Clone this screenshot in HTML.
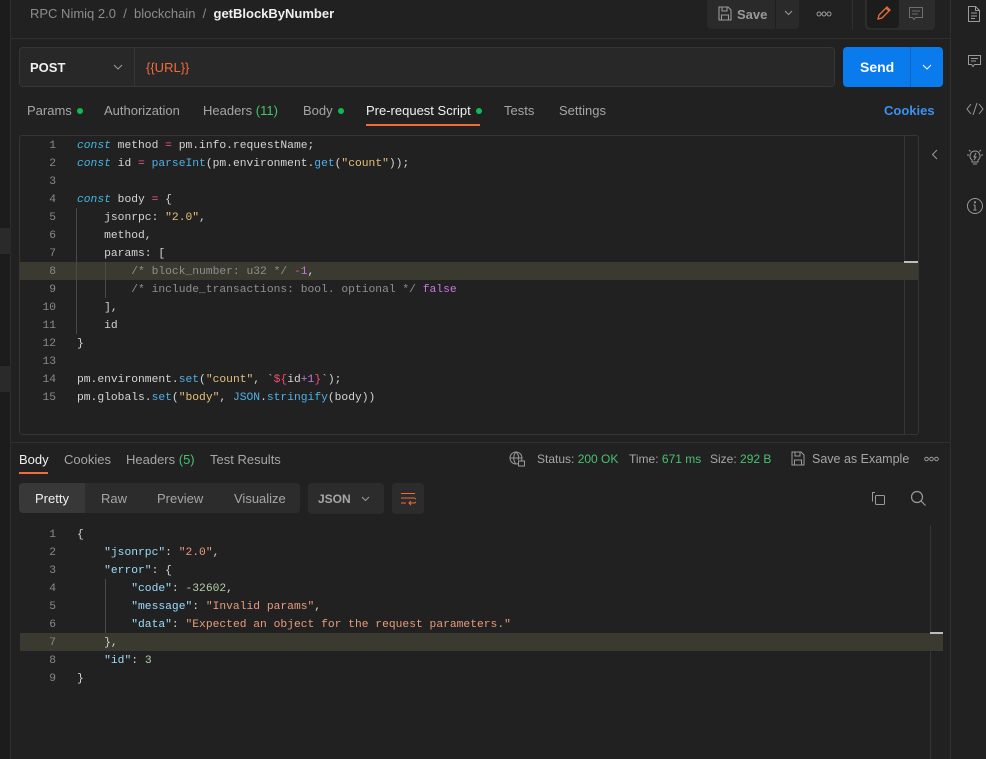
<!DOCTYPE html>
<html><head><meta charset="utf-8"><style>
*{box-sizing:border-box;margin:0;padding:0}
body{width:986px;height:759px;background:#212121;overflow:hidden;position:relative;font-family:"Liberation Sans",sans-serif;color:#a6a6a6;font-size:13px}
.a{position:absolute}
.mono{font-family:"Liberation Mono",monospace;font-size:11.3px;white-space:pre;color:#d4d4d4}
.ln{position:absolute;width:36px;text-align:right;color:#8a8a8a;font-family:"Liberation Mono",monospace;font-size:11.3px}
.k{color:#43b6e0;font-style:italic}.f{color:#4fb0e6}.s{color:#e5c07b}.c{color:#8f8f8f}.n{color:#c678dd}.r{color:#f0506e}.o{color:#ee5a8a}
.js{color:#9cdcfe}.jv{color:#e89c7c}.jn{color:#b5cea8}
.dot{display:inline-block;width:6px;height:6px;border-radius:50%;background:#0cbb52;margin-left:5px;vertical-align:1px}
.g{color:#49c171}
</style></head><body>
<div class="a" style="left:0;top:0;width:11px;height:759px;background:#1c1c1c;border-right:1px solid #2d2d2d"></div>
<div class="a" style="left:0;top:228px;width:11px;height:26px;background:#2a2a2a"></div>
<div class="a" style="left:0;top:366px;width:11px;height:26px;background:#2a2a2a"></div>
<div class="a" style="left:950px;top:0;width:36px;height:759px;border-left:1px solid #2f2f2f;background:#212121"></div>
<div class="a" style="left:11px;top:38px;width:939px;height:1px;background:#2f2f2f"></div>
<div class="a" style="left:30px;top:6px;font-size:13px;color:#8c8c8c">RPC Nimiq 2.0 &nbsp;/&nbsp; blockchain &nbsp;/&nbsp; <b style="color:#f0f0f0">getBlockByNumber</b></div>
<!-- save -->
<div class="a" style="left:707px;top:0;width:92px;height:29px;background:#2a2a2a;border-radius:0 0 4px 4px"></div>
<div class="a" style="left:775px;top:0;width:1px;height:29px;background:#1f1f1f"></div>
<svg class="a" style="left:718px;top:6px" width="14" height="15" viewBox="0 0 14 15" fill="none" stroke="#9a9a9a" stroke-width="1.1"><path d="M1 1h9l3 3v10H1z M4 1v4h5V1 M3.5 14V9h7v5"/></svg>
<div class="a" style="left:737px;top:7px;font-weight:bold;color:#9a9a9a">Save</div>
<svg class="a" style="left:784px;top:10px" width="9" height="6"><path d="M1 1l3.5 3.5L8 1" stroke="#9a9a9a" fill="none"/></svg>
<svg class="a" style="left:816px;top:11px" width="16" height="6" fill="none" stroke="#9a9a9a"><circle cx="3" cy="3" r="2"/><circle cx="8" cy="3" r="2"/><circle cx="13" cy="3" r="2"/></svg>
<div class="a" style="left:852px;top:0;width:1px;height:30px;background:#2f2f2f"></div>
<div class="a" style="left:865px;top:0;width:70px;height:30px;background:#2c2c2c;border-radius:0 0 4px 4px"></div>
<div class="a" style="left:867px;top:0;width:32px;height:28px;background:#1c1c1c;border-radius:0 0 4px 4px"></div>
<svg class="a" style="left:875px;top:5px" width="16" height="17"><path d="M3 14l1-4 8-8 3 3-8 8z M11 3l3 3" stroke="#e4703c" fill="none" stroke-width="1.3"/></svg>
<svg class="a" style="left:908px;top:6px" width="16" height="16" fill="none" stroke="#6e6e6e"><path d="M1.5 1.5h13v10h-7l-1.5 2-1.5-2h-3z M4 5h8 M4 8h6"/></svg>
<!-- right sidebar icons -->
<svg class="a" style="left:967px;top:5px" width="14" height="18" fill="none" stroke="#9a9a9a"><path d="M1.5 1.5h7l4 4v11h-11z M8.5 1.5v4h4 M4 8h6 M4 11h6 M4 13.5h4"/></svg>
<svg class="a" style="left:967px;top:54px" width="15" height="15" fill="none" stroke="#9a9a9a"><path d="M1.5 1.5h12v9h-6l-1.5 2-1.5-2h-3z M4 4.5h7 M4 7h5"/></svg>
<svg class="a" style="left:966px;top:102px" width="18" height="14" fill="none" stroke="#9a9a9a"><path d="M5 2L1 7l4 5 M13 2l4 5-4 5 M11 1L7 13"/></svg>
<svg class="a" style="left:966px;top:148px" width="18" height="18" fill="none" stroke="#9a9a9a"><path d="M9 3a5 5 0 0 0-3 9v2h6v-2a5 5 0 0 0-3-9z M7 16h4 M10 5l-2 4h2l-2 3 M1 7h2 M15 7h2 M3 2l1.5 1.5 M15 2l-1.5 1.5"/></svg>
<svg class="a" style="left:966px;top:197px" width="18" height="18" fill="none" stroke="#9a9a9a"><circle cx="9" cy="9" r="7.5"/><path d="M9 8v5 M7.5 13h3 M7.5 8H9"/><circle cx="9" cy="5.3" r=".6" fill="#9a9a9a"/></svg>
<!-- URL bar -->
<div class="a" style="left:19px;top:47px;width:816px;height:40px;background:#282828;border:1px solid #363636;border-radius:4px"></div>
<div class="a" style="left:134px;top:48px;width:1px;height:38px;background:#363636"></div>
<div class="a" style="left:30px;top:60px;font-weight:bold;color:#f0f0f0">POST</div>
<svg class="a" style="left:113px;top:64px" width="10" height="6"><path d="M1 1l4 4 4-4" stroke="#9a9a9a" fill="none"/></svg>
<div class="a" style="left:146px;top:60px;color:#f26b3a">{{URL}}</div>
<div class="a" style="left:843px;top:47px;width:100px;height:40px;background:#097bed;border-radius:4px"></div>
<div class="a" style="left:910px;top:47px;width:1px;height:40px;background:#0a66c2"></div>
<div class="a" style="left:860px;top:59px;font-weight:bold;color:#fff;font-size:14px">Send</div>
<svg class="a" style="left:922px;top:64px" width="10" height="6"><path d="M1 1l4 4 4-4" stroke="#fff" fill="none"/></svg>
<!-- tabs -->
<div class="a" style="left:27px;top:103px;color:#a6a6a6">Params<span class="dot"></span></div>
<div class="a" style="left:104px;top:103px">Authorization</div>
<div class="a" style="left:203px;top:103px">Headers <span class="g">(11)</span></div>
<div class="a" style="left:303px;top:103px">Body<span class="dot"></span></div>
<div class="a" style="left:366px;top:103px;color:#f0f0f0">Pre-request Script<span class="dot"></span></div>
<div class="a" style="left:366px;top:124px;width:114px;height:2px;background:#f26b3a"></div>
<div class="a" style="left:504px;top:103px">Tests</div>
<div class="a" style="left:559px;top:103px">Settings</div>
<div class="a" style="left:884px;top:103px;color:#3d91f0;font-weight:bold">Cookies</div>
<!-- script editor -->
<div class="a" style="left:19px;top:135px;width:900px;height:300px;border:1px solid #353535;border-radius:3px"></div>
<div class="a" style="left:904px;top:136px;width:1px;height:298px;background:#353535"></div>
<div class="a" style="left:20px;top:262px;width:898px;height:18px;background:#3a3a30"></div>
<div class="a" style="left:904px;top:261px;width:14px;height:2px;background:#bdbdbd"></div>
<svg class="a" style="left:931px;top:149px" width="7" height="11"><path d="M6 1L1.5 5.5 6 10" stroke="#9a9a9a" fill="none"/></svg>
<div class="a" style="left:76px;top:208px;width:1px;height:126px;background:#4a4a4a"></div>
<div class="a" style="left:105px;top:262px;width:1px;height:36px;background:#4a4a4a"></div>
<!-- divider -->
<div class="a" style="left:11px;top:442px;width:939px;height:1px;background:#2f2f2f"></div>
<div class="a" style="left:19px;top:452px;color:#f0f0f0">Body</div>
<div class="a" style="left:19px;top:472px;width:29px;height:2px;background:#f26b3a"></div>
<div class="a" style="left:64px;top:452px">Cookies</div>
<div class="a" style="left:126px;top:452px">Headers <span class="g">(5)</span></div>
<div class="a" style="left:210px;top:452px">Test Results</div>
<svg class="a" style="left:509px;top:451px" width="16" height="16" fill="none" stroke="#9a9a9a"><circle cx="7" cy="7" r="6"/><path d="M1 7h12 M7 1c-3 3-3 9 0 12 M7 1c3 3 3 6 2 8"/><rect x="9.5" y="10" width="6" height="5" fill="#212121"/></svg>
<div class="a" style="left:537px;top:452px;font-size:12px">Status: <span class="g">200 OK</span></div>
<div class="a" style="left:629px;top:452px;font-size:12px">Time: <span class="g">671 ms</span></div>
<div class="a" style="left:710px;top:452px;font-size:12px">Size: <span class="g">292 B</span></div>
<svg class="a" style="left:791px;top:451px" width="14" height="15" fill="none" stroke="#9a9a9a"><path d="M1 1h9l3 3v10H1z M4 1v4h5V1 M3.5 14V9h7v5"/></svg>
<div class="a" style="left:812px;top:452px;font-size:12.5px">Save as Example</div>
<svg class="a" style="left:924px;top:456px" width="15" height="6" fill="none" stroke="#9a9a9a"><circle cx="2.5" cy="3" r="1.8"/><circle cx="7.5" cy="3" r="1.8"/><circle cx="12.5" cy="3" r="1.8"/></svg>
<div class="a" style="left:19px;top:483px;width:281px;height:30px;background:#2c2c2c;border-radius:4px"></div>
<div class="a" style="left:19px;top:483px;width:66px;height:30px;background:#383838;border-radius:4px 0 0 4px"></div>
<div class="a" style="left:35px;top:491px;color:#f0f0f0">Pretty</div>
<div class="a" style="left:101px;top:491px">Raw</div>
<div class="a" style="left:157px;top:491px">Preview</div>
<div class="a" style="left:234px;top:491px">Visualize</div>
<div class="a" style="left:308px;top:483px;width:76px;height:31px;background:#2c2c2c;border-radius:4px"></div>
<div class="a" style="left:318px;top:492px;font-weight:bold;font-size:12px">JSON</div>
<svg class="a" style="left:361px;top:496px" width="9" height="6"><path d="M1 1l3.5 3.5L8 1" stroke="#9a9a9a" fill="none"/></svg>
<div class="a" style="left:392px;top:483px;width:32px;height:31px;background:#2c2c2c;border-radius:4px"></div>
<svg class="a" style="left:400px;top:492px" width="16" height="14" fill="none" stroke="#f26b3a"><path d="M1 1.5h14 M1 6h13a2.5 2.5 0 0 1 0 5h-5 M11 9l-2 2 2 2 M1 11h5"/></svg>
<svg class="a" style="left:871px;top:491px" width="16" height="16" fill="none" stroke="#9a9a9a"><path d="M4 1.5h-2.5v9"/><rect x="4.5" y="4.5" width="9" height="9" rx="1"/></svg>
<svg class="a" style="left:910px;top:490px" width="17" height="17" fill="none" stroke="#9a9a9a" stroke-width="1.2"><circle cx="7" cy="7" r="5.5"/><path d="M11 11l4.5 4.5"/></svg>
<!-- response editor -->
<div class="a" style="left:930px;top:525px;width:1px;height:234px;background:#353535"></div>
<div class="a" style="left:20px;top:633px;width:923px;height:18px;background:#3a3a30"></div>
<div class="a" style="left:930px;top:632px;width:13px;height:2px;background:#bdbdbd"></div>
<div class="a" style="left:105px;top:579px;width:1px;height:54px;background:#4a4a4a"></div>
<!-- script lines -->
<div class="ln" style="left:20px;top:140px">1</div><div class="a mono" style="left:77px;top:140px"><span class="k">const</span> method <span class="o">=</span> pm.info.requestName;</div>
<div class="ln" style="left:20px;top:158px">2</div><div class="a mono" style="left:77px;top:158px"><span class="k">const</span> id <span class="o">=</span> <span class="f">parseInt</span>(pm.environment.<span class="f">get</span>(<span class="s">"count"</span>));</div>
<div class="ln" style="left:20px;top:176px">3</div>
<div class="ln" style="left:20px;top:194px">4</div><div class="a mono" style="left:77px;top:194px"><span class="k">const</span> body <span class="o">=</span> {</div>
<div class="ln" style="left:20px;top:212px">5</div><div class="a mono" style="left:77px;top:212px">    jsonrpc: <span class="s">"2.0"</span>,</div>
<div class="ln" style="left:20px;top:230px">6</div><div class="a mono" style="left:77px;top:230px">    method,</div>
<div class="ln" style="left:20px;top:248px">7</div><div class="a mono" style="left:77px;top:248px">    params: [</div>
<div class="ln" style="left:20px;top:266px">8</div><div class="a mono" style="left:77px;top:266px">        <span class="c">/* block_number: u32 */</span> <span class="r">-</span><span class="n">1</span>,</div>
<div class="ln" style="left:20px;top:284px">9</div><div class="a mono" style="left:77px;top:284px">        <span class="c">/* include_transactions: bool. optional */</span> <span class="n">false</span></div>
<div class="ln" style="left:20px;top:302px">10</div><div class="a mono" style="left:77px;top:302px">    ],</div>
<div class="ln" style="left:20px;top:320px">11</div><div class="a mono" style="left:77px;top:320px">    id</div>
<div class="ln" style="left:20px;top:338px">12</div><div class="a mono" style="left:77px;top:338px">}</div>
<div class="ln" style="left:20px;top:356px">13</div>
<div class="ln" style="left:20px;top:374px">14</div><div class="a mono" style="left:77px;top:374px">pm.environment.<span class="f">set</span>(<span class="s">"count"</span>, <span class="s">`</span><span class="r">${</span>id<span class="n">+1</span><span class="r">}</span><span class="s">`</span>);</div>
<div class="ln" style="left:20px;top:392px">15</div><div class="a mono" style="left:77px;top:392px">pm.globals.<span class="f">set</span>(<span class="s">"body"</span>, <span class="f">JSON</span>.<span class="f">stringify</span>(body))</div>
<!-- response lines -->
<div class="ln" style="left:20px;top:529px">1</div><div class="a mono" style="left:77px;top:529px">{</div>
<div class="ln" style="left:20px;top:547px">2</div><div class="a mono" style="left:77px;top:547px">    <span class="js">"jsonrpc"</span>: <span class="jv">"2.0"</span>,</div>
<div class="ln" style="left:20px;top:565px">3</div><div class="a mono" style="left:77px;top:565px">    <span class="js">"error"</span>: {</div>
<div class="ln" style="left:20px;top:583px">4</div><div class="a mono" style="left:77px;top:583px">        <span class="js">"code"</span>: <span class="jn">-32602</span>,</div>
<div class="ln" style="left:20px;top:601px">5</div><div class="a mono" style="left:77px;top:601px">        <span class="js">"message"</span>: <span class="jv">"Invalid params"</span>,</div>
<div class="ln" style="left:20px;top:619px">6</div><div class="a mono" style="left:77px;top:619px">        <span class="js">"data"</span>: <span class="jv">"Expected an object for the request parameters."</span></div>
<div class="ln" style="left:20px;top:637px">7</div><div class="a mono" style="left:77px;top:637px">    },</div>
<div class="ln" style="left:20px;top:655px">8</div><div class="a mono" style="left:77px;top:655px">    <span class="js">"id"</span>: <span class="jn">3</span></div>
<div class="ln" style="left:20px;top:673px">9</div><div class="a mono" style="left:77px;top:673px">}</div>
</body></html>
